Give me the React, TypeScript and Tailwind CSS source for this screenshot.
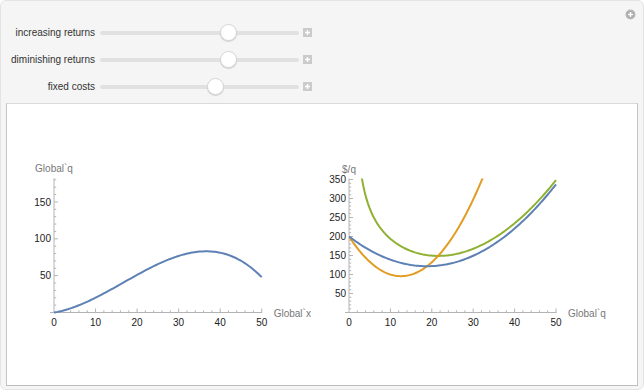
import React from 'react';

const font = { fontFamily: '"Liberation Sans", Arial, sans-serif' };

type Fn = (x: number) => number;

// sample a function into an svg path in page coordinates
function curve(f: Fn, from: number, to: number, ox: number, oy: number, sx: number, sy: number) {
  const pts: string[] = [];
  const n = 120;
  for (let i = 0; i <= n; i++) {
    const x = from + ((to - from) * i) / n;
    const v = f(x);
    pts.push(`${(ox + x * sx).toFixed(2)},${(oy - v * sy).toFixed(2)}`);
  }
  return 'M' + pts.join(' L');
}

const AXIS = '#b4b4b4';

function Axes({
  ox, oy, sx, sy, xMax, yMax, yMajor, xLabel, yLabel,
}: {
  ox: number; oy: number; sx: number; sy: number; xMax: number; yMax: number; yMajor: number;
  xLabel: string; yLabel: string;
}) {
  const xTicks: number[] = [];
  for (let i = 2; i <= xMax; i += 2) xTicks.push(i);
  const yTicks: number[] = [];
  for (let i = 10; i <= yMax; i += 10) yTicks.push(i);
  return (
    <g>
      <line x1={ox - 4} y1={oy} x2={ox + xMax * sx + 0.5} y2={oy} stroke={AXIS} strokeWidth={1} />
      <line x1={ox} y1={oy} x2={ox} y2={oy - yMax * sy - 1} stroke={AXIS} strokeWidth={1} />
      {xTicks.map((t) => {
        const major = t % 10 === 0;
        const x = ox + t * sx;
        return <line key={'x' + t} x1={x} y1={oy} x2={x} y2={oy - (major ? 4 : 2.2)} stroke={AXIS} strokeWidth={1} />;
      })}
      {yTicks.map((t) => {
        const major = t % yMajor === 0;
        const y = oy - t * sy;
        return <line key={'y' + t} x1={ox} y1={y} x2={ox + (major ? 4 : 2.2)} y2={y} stroke={AXIS} strokeWidth={1} />;
      })}
      {[0, 10, 20, 30, 40, 50].map((t) => (
        <text key={'xl' + t} x={ox + t * sx} y={oy + 13} fontSize={10} textAnchor="middle" fill="#222" style={font}>
          {t}
        </text>
      ))}
      {yTicks.filter((t) => t % yMajor === 0).map((t) => (
        <text key={'yl' + t} x={ox - 3} y={oy - t * sy + 3.6} fontSize={10} textAnchor="end" fill="#222" style={font}>
          {t}
        </text>
      ))}
      <text x={ox + xMax * sx + 12} y={oy + 4} fontSize={10} fill="#777" style={font}>
        {xLabel}
      </text>
      <text x={ox} y={oy - yMax * sy - 7} fontSize={10} textAnchor="middle" fill="#777" style={font}>
        {yLabel}
      </text>
    </g>
  );
}

function ProductionPlot() {
  const ox = 54, oy = 312.5, sx = 4.154, sy = 0.737;
  const q: Fn = (x) => 0.922 * x + 0.1352 * x * x - 0.002689 * x * x * x;
  return (
    <svg width={315} height={281} viewBox="7 104 315 281" className="block shrink-0">
      <Axes ox={ox} oy={oy} sx={sx} sy={sy} xMax={50} yMax={181} yMajor={50} xLabel="Global`x" yLabel="Global`q" />
      <path d={curve(q, 0, 50, ox, oy, sx, sy)} fill="none" stroke="#5e81b5" strokeWidth={2} />
    </svg>
  );
}

function CostPlot() {
  const ox = 349, oy = 312.5, sx = 4.14, sy = 0.38;
  const avc: Fn = (x) => 200 - 8.29 * x + 0.219 * x * x + 0.0000333 * x * x * x;
  const mc: Fn = (x) => 200 - 16.58 * x + 0.657 * x * x + 0.000133 * x * x * x;
  const atc: Fn = (x) => avc(x) + 550 / x;
  return (
    <svg width={314} height={281} viewBox="322 104 314 281" className="block shrink-0">
      <defs>
        <clipPath id="costclip">
          <rect x={ox} y={oy - 350 * sy - 1} width={220} height={350 * sy + 2} />
        </clipPath>
      </defs>
      <Axes ox={ox} oy={oy} sx={sx} sy={sy} xMax={50} yMax={350} yMajor={50} xLabel="Global`q" yLabel="$/q" />
      <g clipPath="url(#costclip)" fill="none" strokeWidth={2}>
        <path d={curve(atc, 3, 50, ox, oy, sx, sy)} stroke="#8fb131" />
        <path d={curve(mc, 0, 33, ox, oy, sx, sy)} stroke="#e19c24" />
        <path d={curve(avc, 0, 50, ox, oy, sx, sy)} stroke="#5e81b5" />
      </g>
    </svg>
  );
}

function PlusBox() {
  return (
    <svg width={9} height={9} viewBox="0 0 9 9" className="block shrink-0">
      <rect x={0} y={0} width={9} height={9} fill="#cbcbcb" />
      <path d="M4.5 2v5M2 4.5h5" stroke="#fff" strokeWidth={1.4} />
    </svg>
  );
}

function SliderRow({ label, pos }: { label: string; pos: number }) {
  return (
    <div className="flex h-[27px] items-center">
      <div className="w-[94px] text-right text-[10px] text-[#333]" style={font}>
        {label}
      </div>
      <div className="relative ml-[5px] h-[4px] w-[199px] rounded-full bg-[#e1e1e1]">
        <div
          className="absolute top-[-7px] h-[17px] w-[17px] rounded-full border border-[#d6d6d6] bg-white shadow-[0_1px_1px_rgba(0,0,0,0.15)]"
          style={{ left: pos - 8 }}
        />
      </div>
      <div className="ml-[4px]">
        <PlusBox />
      </div>
    </div>
  );
}

export default function App() {
  return (
    <div className="relative flex h-[390px] w-[644px] flex-col rounded-[6px] border border-[#e4e4e4] bg-[#f5f5f5]">
      <svg width={11} height={11} viewBox="0 0 11 11" className="absolute right-[7px] top-[8px]">
        <circle cx={5.5} cy={5.5} r={5} fill="#b9b9b9" />
        <circle cx={5.5} cy={5.5} r={3.6} fill="#a9a9a9" />
        <path d="M5.5 3v5M3 5.5h5" stroke="#fff" strokeWidth={1.5} />
      </svg>
      <div className="flex flex-col pt-[18px]">
        <SliderRow label="increasing returns" pos={128} />
        <SliderRow label="diminishing returns" pos={128} />
        <SliderRow label="fixed costs" pos={115} />
      </div>
      <div className="mx-[5px] mt-[3px] flex h-[283px] border border-[#c4c4c4] border-t-[#dadada] border-b-[#bdbdbd] bg-white">
        <ProductionPlot />
        <CostPlot />
      </div>
    </div>
  );
}
